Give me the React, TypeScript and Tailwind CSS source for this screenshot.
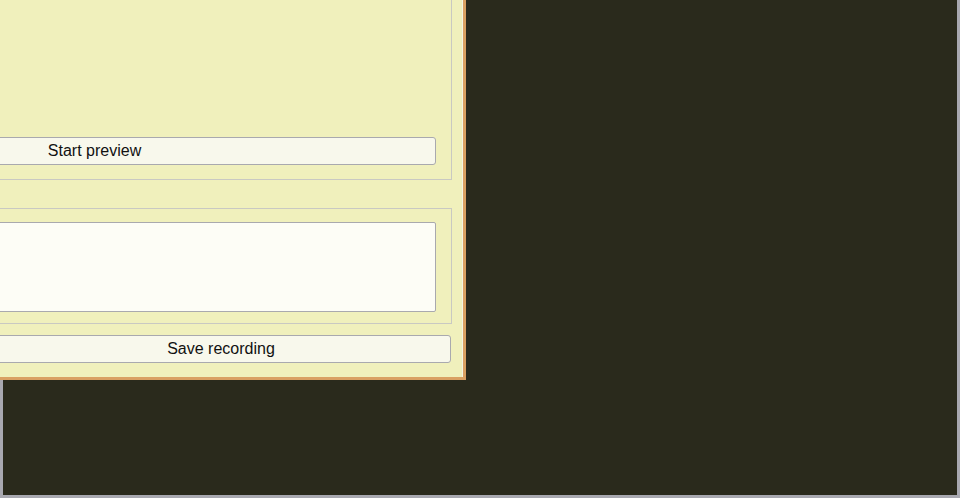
export default function App() {
  return (
    <div
      className="relative w-[960px] h-[498px] overflow-hidden bg-[#2b2b1d]"
      style={{ fontFamily: '"Liberation Sans", Arial, sans-serif' }}
    >
      <div className="w-[960px] h-[498px] border-x-[3px] border-b-[3px] border-[#a8a8b0] bg-[#2a2a1c]" />
      <div className="absolute left-[-260px] top-[-20px] w-[726px] h-[400px] bg-[#f0f0bc] border-r-[3px] border-b-[3px] border-[#d9a062] flex flex-col items-end pt-[10px]">
        <div className="absolute right-[0px] top-0 bottom-0 w-px bg-[#f4f4e4]" />
        <div className="w-[700px] h-[190px] mr-[11px] border border-[#c9c9c2] flex flex-col items-end justify-end pb-[14px]">
          <button className="w-[683px] h-[28px] mr-[15px] border border-[#a9a9ae] rounded-[3px] bg-[#f8f8ec] text-[16px] text-[#111] flex items-center justify-center leading-none">
            Start preview
          </button>
        </div>
        <div className="w-[700px] h-[116px] mt-[28px] mr-[11px] border border-[#c9c9c2] flex flex-col items-end pt-[13px]">
          <div className="w-[620px] h-[90px] mr-[15px] border border-[#a9a9ae] rounded-[2px] bg-[#fdfdf6]" />
        </div>
        <button className="w-[460px] h-[28px] mt-[11px] mr-[12px] border border-[#a9a9ae] rounded-[3px] bg-[#f8f8ec] text-[16px] text-[#111] flex items-center justify-center leading-none">
          Save recording
        </button>
      </div>
    </div>
  );
}
